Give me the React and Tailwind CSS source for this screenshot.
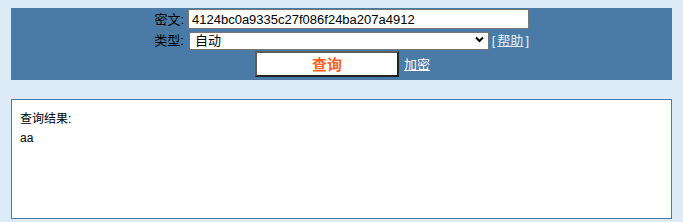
import React, { useState } from 'react';

export default function App() {
  const [cipher, setCipher] = useState('4124bc0a9335c27f086f24ba207a4912');
  const [type, setType] = useState('auto');

  return (
    <div className="min-h-[222px] bg-[#dcebf5] pt-2 px-[11px] pb-1 font-['Liberation_Sans','Noto_Sans_CJK_SC',sans-serif] text-[13px] text-black">
      {/* query form */}
      <div className="bg-[#4a7ba7] pt-px pb-[3px]">
        <div className="w-[375px] mx-auto flex flex-col gap-[2px]">
          <div className="flex items-center h-5">
            <span className="w-[30px] text-right leading-none whitespace-nowrap">密文:</span>
            <input
              className="ml-auto w-[341px] h-5 bg-white border border-[#767676] px-[3px] text-[13px] outline-none"
              value={cipher}
              onChange={(e) => setCipher(e.target.value)}
            />
          </div>
          <div className="flex items-center h-[18px]">
            <span className="w-[30px] text-right leading-none whitespace-nowrap">类型:</span>
            <div className="relative ml-[5px] w-[300px] h-[18px]">
              <select
                className="appearance-none w-full h-full bg-white border border-[#767676] pl-[5px] text-[13px] leading-none outline-none"
                value={type}
                onChange={(e) => setType(e.target.value)}
              >
                <option value="auto">自动</option>
                <option value="md5">md5</option>
              </select>
              <svg className="absolute right-[5px] top-[5px] w-[9px] h-[7px] pointer-events-none" viewBox="0 0 9 7">
                <path d="M1 1.5 L4.5 5 L8 1.5" fill="none" stroke="#000" strokeWidth="2" />
              </svg>
            </div>
            <a href="#" className="ml-[3px] text-[#e6eef6] whitespace-nowrap leading-none">
              [<span className="underline mx-[2px]">帮助</span>]
            </a>
          </div>
          <div className="flex items-center justify-center pl-[2px]">
            <button className="w-[144px] h-[26px] bg-white border-2 border-t-[#5c5c5c] border-l-[#5c5c5c] border-r-[#222] border-b-[#222] text-[#ff5f1f] font-bold text-[15px] leading-none">
              查询
            </button>
            <a href="#" className="ml-[5px] text-white underline leading-none">加密</a>
          </div>
        </div>
      </div>

      {/* result */}
      <div className="mt-[19px] h-[120px] bg-white border border-[#4a7ba7] px-2 pt-[10px] text-[12px] leading-[19px]">
        <div>查询结果:</div>
        <div>aa</div>
      </div>
    </div>
  );
}
